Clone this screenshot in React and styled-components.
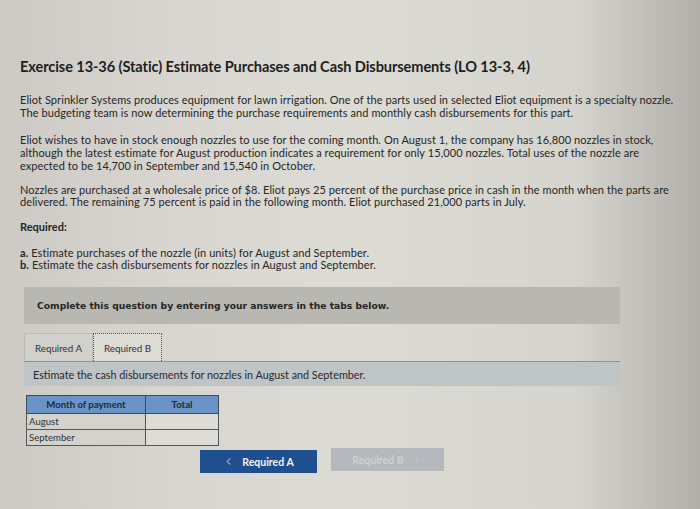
import React from 'react';
import styled, { createGlobalStyle } from 'styled-components';
import { ChevronLeft, ChevronRight } from 'lucide-react';

const Global = createGlobalStyle`
  html, body { margin: 0; padding: 0; }
  body {
    width: 700px;
    height: 509px;
    overflow: hidden;
    font-family: Lato, "Open Sans", sans-serif;
    color: #262626;
  }
`;

const Page = styled.div`
  width: 700px;
  height: 509px;
  box-sizing: border-box;
  padding: 58px 0 0 20px;
  background: linear-gradient(90deg, #cdc9c5 0%, #d9d6d1 25%, #dcdbd4 50%, #d6d4ce 82%, #b2afaa 100%);
`;

const Title = styled.h1`
  margin: 0 0 19px;
  font-size: 14.6px;
  font-weight: 700;
  letter-spacing: -0.1px;
  color: #1e1e1e;
  white-space: nowrap;
`;

const Para = styled.p`
  margin: 0 0 ${(p) => p.$gap ?? 14}px;
  font-size: 11px;
  line-height: 12.7px;
  white-space: nowrap;
  letter-spacing: 0.08px;
`;

const Heading = styled.p`
  margin: 0 0 13px;
  font-size: 11px;
  line-height: 12.7px;
  font-weight: 700;
`;

const Panel = styled.div`
  margin-left: 4px;
  width: 596px;
`;

const Banner = styled.div`
  height: 37px;
  background: #b8b7b1;
  display: flex;
  align-items: center;
  padding-left: 13px;
  font-family: "DejaVu Sans", sans-serif;
  font-size: 9.2px;
  font-weight: 700;
  color: #262626;
`;

const Tabs = styled.div`
  display: flex;
  margin-top: 9px;
  height: 28px;
  border-bottom: 1px solid #8d9296;
`;

const Tab = styled.div`
  width: 69px;
  box-sizing: border-box;
  display: flex;
  align-items: center;
  justify-content: center;
  font-size: 9.8px;
  color: #333;
  background: ${(p) => (p.$active ? '#dcdbd5' : '#d2d0ca')};
  border: ${(p) => (p.$active ? '1px dotted #555' : '1px solid #bcbbb5')};
  border-bottom: none;
`;

const Instruction = styled.div`
  height: 24px;
  background: #bfc4c6;
  display: flex;
  align-items: center;
  padding-left: 9px;
  font-size: 10.8px;
  color: #2a2a2a;
`;

const Table = styled.table`
  margin: 9px 0 0 2px;
  border-collapse: collapse;
  font-size: 9.6px;
`;

const Th = styled.th`
  height: 17px;
  padding: 0;
  width: ${(p) => p.$w}px;
  background: #6a94c8;
  color: #1e2a3a;
  font-weight: 700;
  border: 1px solid #3c4a58;
`;

const Td = styled.td`
  height: 15px;
  padding: 0 0 0 2px;
  border: 1px solid #555;
  background: ${(p) => (p.$input ? '#dedcd6' : '#d4d2cc')};
  color: #333;
`;

const Nav = styled.div`
  display: flex;
  gap: 14px;
  margin: 2px 0 0 176px;
`;

const NavButton = styled.div`
  width: ${(p) => (p.$on ? 117 : 113)}px;
  height: 23px;
  margin-top: ${(p) => (p.$on ? 2 : 0)}px;
  display: flex;
  align-items: center;
  justify-content: center;
  gap: 8px;
  font-size: 10.5px;
  font-weight: 700;
  background: ${(p) => (p.$on ? '#1f4f8e' : '#b5b9bd')};
  color: ${(p) => (p.$on ? '#f2f4f8' : '#cdd0d3')};
`;

export default function App() {
  return (
    <>
      <Global />
      <Page>
        <Title>Exercise 13-36 (Static) Estimate Purchases and Cash Disbursements (LO 13-3, 4)</Title>
        <Para $gap={15}>
          Eliot Sprinkler Systems produces equipment for lawn irrigation. One of the parts used in selected Eliot equipment is a specialty nozzle.
          <br />
          The budgeting team is now determining the purchase requirements and monthly cash disbursements for this part.
        </Para>
        <Para $gap={11}>
          Eliot wishes to have in stock enough nozzles to use for the coming month. On August 1, the company has 16,800 nozzles in stock,
          <br />
          although the latest estimate for August production indicates a requirement for only 15,000 nozzles. Total uses of the nozzle are
          <br />
          expected to be 14,700 in September and 15,540 in October.
        </Para>
        <Para $gap={12}>
          Nozzles are purchased at a wholesale price of $8. Eliot pays 25 percent of the purchase price in cash in the month when the parts are
          <br />
          delivered. The remaining 75 percent is paid in the following month. Eliot purchased 21,000 parts in July.
        </Para>
        <Heading>Required:</Heading>
        <Para $gap={15}>
          <b>a.</b> Estimate purchases of the nozzle (in units) for August and September.
          <br />
          <b>b.</b> Estimate the cash disbursements for nozzles in August and September.
        </Para>
        <Panel>
          <Banner>Complete this question by entering your answers in the tabs below.</Banner>
          <Tabs>
            <Tab>Required A</Tab>
            <Tab $active>Required B</Tab>
          </Tabs>
          <Instruction>Estimate the cash disbursements for nozzles in August and September.</Instruction>
          <Table>
            <thead>
              <tr>
                <Th $w={118}>Month of payment</Th>
                <Th $w={72}>Total</Th>
              </tr>
            </thead>
            <tbody>
              <tr>
                <Td>August</Td>
                <Td $input />
              </tr>
              <tr>
                <Td>September</Td>
                <Td $input />
              </tr>
            </tbody>
          </Table>
          <Nav>
            <NavButton $on>
              <ChevronLeft size={11} strokeWidth={2} />
              Required A
            </NavButton>
            <NavButton>
              Required B
              <ChevronRight size={11} strokeWidth={2} />
            </NavButton>
          </Nav>
        </Panel>
      </Page>
    </>
  );
}
